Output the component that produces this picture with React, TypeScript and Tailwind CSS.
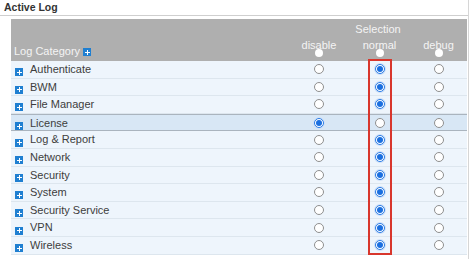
const rows: { name: string; sel: "disable" | "normal" | "debug"; hl?: boolean }[] = [
  { name: "Authenticate", sel: "normal" },
  { name: "BWM", sel: "normal" },
  { name: "File Manager", sel: "normal" },
  { name: "License", sel: "disable", hl: true },
  { name: "Log & Report", sel: "normal" },
  { name: "Network", sel: "normal" },
  { name: "Security", sel: "normal" },
  { name: "System", sel: "normal" },
  { name: "Security Service", sel: "normal" },
  { name: "VPN", sel: "normal" },
  { name: "Wireless", sel: "normal" },
];

function PlusIcon({ className = "" }: { className?: string }) {
  return (
    <span
      className={`relative inline-block h-[8px] w-[8px] shrink-0 bg-[#1f7fd1] ${className}`}
    >
      <span className="absolute left-[1.5px] top-[3.5px] h-[1px] w-[5px] bg-white" />
      <span className="absolute left-[3.5px] top-[1.5px] h-[5px] w-[1px] bg-white" />
    </span>
  );
}

function Radio({ on }: { on: boolean }) {
  return on ? (
    <span className="flex h-[10px] w-[10px] items-center justify-center rounded-full border border-[#2a7be4] bg-white shadow-[0_0_0_1px_#cfe1f8]">
      <span className="h-[6px] w-[6px] rounded-full bg-[#1a6fe0]" />
    </span>
  ) : (
    <span className="h-[10px] w-[10px] rounded-full border border-[#8f8f8f] bg-white" />
  );
}

export default function App() {
  return (
    <div className="flex h-[259px] w-[474px] overflow-hidden bg-white font-['Liberation_Sans',Arial,sans-serif]">
      <div className="w-[468px] shrink-0">
        <div className="h-[16px] border-b border-[#cfcfcf] pl-[4px] text-[10.5px] font-bold leading-[14px] text-[#333]">
          Active Log
        </div>

        <div className="relative ml-[11px] mt-[3px] w-[456px]">
          {/* header */}
          <div className="flex h-[42px] bg-[#afafaf] text-[11px] leading-[13px] text-[#f4f4f4]">
            <div className="flex w-[278px] items-end pb-[3px] pl-[3px]">
              <span>Log Category</span>
              <PlusIcon className="mb-[2px] ml-[3px]" />
            </div>
            <div className="flex flex-1 flex-col pt-[4px]">
              <div className="text-center">Selection</div>
              <div className="mt-[3px] grid grid-cols-[60px_61px_1fr] text-center">
                {["disable", "normal", "debug"].map((l) => (
                  <div key={l} className="flex flex-col items-center">
                    <span>{l}</span>
                    <span className="-mt-[3px] h-[8px] w-[8px] rounded-full bg-white" />
                  </div>
                ))}
              </div>
            </div>
          </div>

          {/* rows */}
          {rows.map((r) => (
            <div
              key={r.name}
              className={`grid h-[17.6px] grid-cols-[278px_60px_61px_1fr] items-center border-b text-[11px] text-[#3d3d3d] ${
                r.hl
                  ? "border-t border-[#aab4be] bg-[#d8e7f5]"
                  : "border-[#dde6ee] bg-[#eef5fc]"
              }`}
            >
              <div className="flex items-center pl-[4px]">
                <PlusIcon className="mt-[6px]" />
                <span className="ml-[7px]">{r.name}</span>
              </div>
              <div className="flex justify-center">
                <Radio on={r.sel === "disable"} />
              </div>
              <div className="flex justify-center">
                <Radio on={r.sel === "normal"} />
              </div>
              <div className="flex justify-center">
                <Radio on={r.sel === "debug"} />
              </div>
            </div>
          ))}

          {/* highlight box over the normal column */}
          <div className="pointer-events-none absolute left-[357px] top-[40px] h-[196px] w-[24px] border-2 border-[#d8362c]" />
        </div>
      </div>
      <div className="flex-1 border-l border-[#d6d6d6]" />
    </div>
  );
}
